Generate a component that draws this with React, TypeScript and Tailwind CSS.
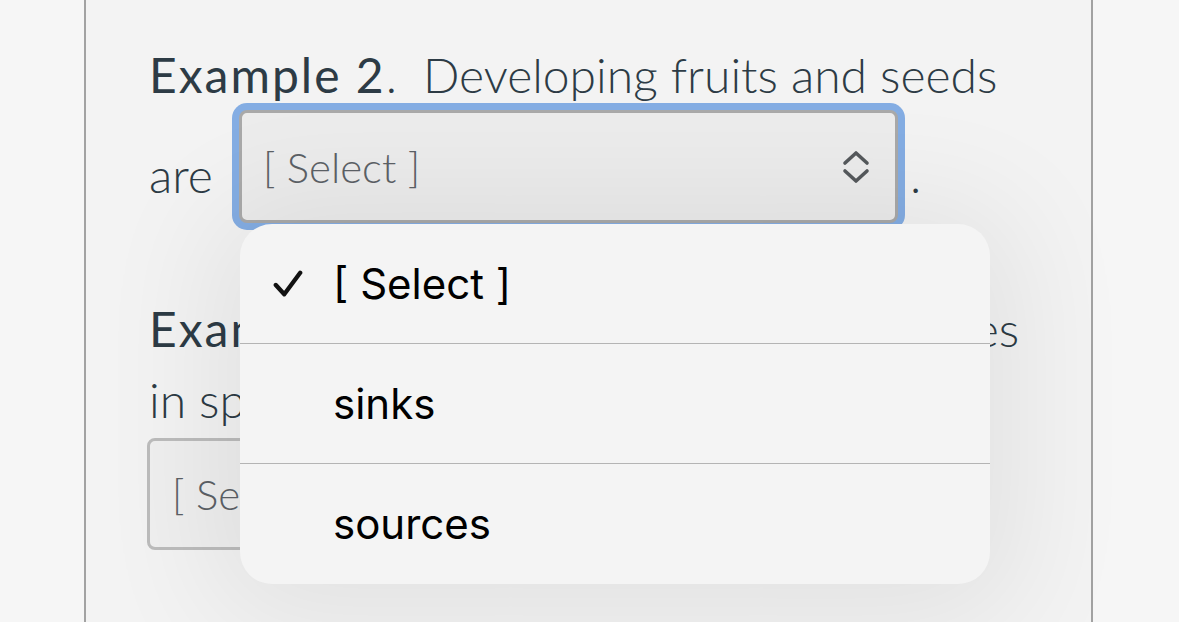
import React from "react";

const lato = { fontFamily: "Lato, 'Liberation Sans', sans-serif" };

function Chevrons() {
  return (
    <svg width="30" height="34" viewBox="0 0 30 34" fill="none" stroke="#55595c" strokeWidth="3.6" strokeLinecap="round" strokeLinejoin="round">
      <path d="M4 13 L15 3 L26 13" />
      <path d="M4 21 L15 31 L26 21" />
    </svg>
  );
}

function MenuRow({ label, checked, last }: { label: string; checked?: boolean; last?: boolean }) {
  return (
    <div className={`flex h-[120px] items-center ${last ? "" : "border-b border-[#b4b4b4]"}`}>
      <div className="flex w-[95px] justify-end pr-[32px]">
        {checked && (
          <svg width="30" height="30" viewBox="0 0 32 32" fill="none" stroke="#111" strokeWidth="4.6" strokeLinecap="round" strokeLinejoin="round">
            <path d="M3 17 L12 27 L29 4" />
          </svg>
        )}
      </div>
      <span className="-ml-[2px] text-[42px] leading-none text-black" style={{ fontFamily: "Inter, Roboto, sans-serif" }}>
        {label}
      </span>
    </div>
  );
}

export default function App() {
  return (
    <div className="relative h-[622px] w-[1179px] overflow-hidden bg-[#f6f6f6]" style={lato}>
      <div className="ml-[84px] h-full w-[1009px] border-x-2 border-[#a2a2a2] bg-[#f3f3f3] px-[63px] pt-[39px] text-[#2d3b45]">
        {/* question 2 */}
        <div className="text-[48px] leading-[71px]">
          <div className="whitespace-nowrap">
            <span className="font-normal tracking-[2px]">Example 2</span>
            <span className="font-light">.&nbsp; Developing fruits and seeds</span>
          </div>
          <div className="flex items-start font-light">
            <span className="mt-[29px]">are</span>
            <div className="ml-[26px] flex h-[113px] w-[659px] items-center justify-between rounded-[8px] border-[3px] border-[#a9a9a9] bg-[#ececec] pl-[21px] pr-[24px] shadow-[0_0_0_7px_#84ade3]">
              <span className="text-[42px] leading-none text-[#5c6166]">[ Select ]</span>
              <Chevrons />
            </div>
            <span className="mt-[29px] ml-[12px]">.</span>
          </div>
        </div>

        {/* question 3 */}
        <div className="mt-[70px] text-[48px] leading-[71px]">
          <div className="whitespace-nowrap">
            <span className="font-normal tracking-[2px]">Example 3</span>
            <span className="font-light">.&nbsp; Storage tissue using reserves</span>
          </div>
          <div className="whitespace-nowrap font-light">in spring are</div>
          <div className="-ml-[2px] mt-[3px] flex h-[112px] w-[659px] items-center rounded-[8px] border-[3px] border-[#bcbcbc] bg-[#efefef] pl-[22px]">
            <span className="text-[42px] font-light leading-none text-[#5c6166]">[ Select ]</span>
          </div>
        </div>
      </div>

      {/* open menu */}
      <div className="absolute left-[240px] top-[224px] w-[750px] overflow-hidden rounded-[32px] bg-[#f4f4f4] shadow-[0_10px_120px_30px_rgba(0,0,0,0.07)]">
        <MenuRow label="[ Select ]" checked />
        <MenuRow label="sinks" />
        <MenuRow label="sources" last />
      </div>
    </div>
  );
}
